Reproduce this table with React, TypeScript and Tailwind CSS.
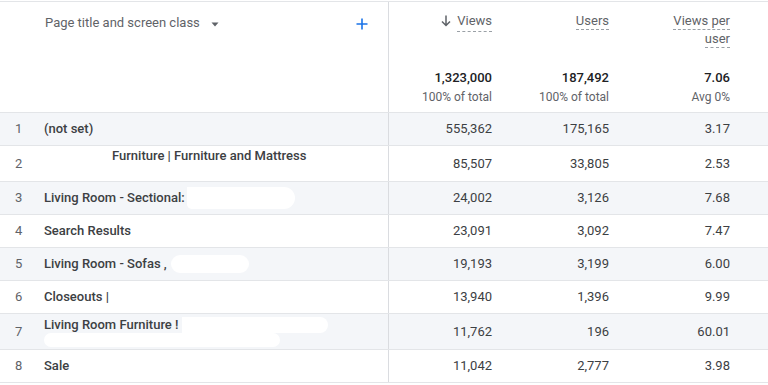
import React from "react"

type Row = {
  n: number
  views: string
  users: string
  vpu: string
  tall?: boolean
  shaded: boolean
  title: React.ReactNode
}

// white patches: the blanked-out parts of the page titles
const Blot = ({ className }: { className: string }) => (
  <span className={`inline-block bg-white align-middle ${className}`} />
)

const rows: Row[] = [
  { n: 1, views: "555,362", users: "175,165", vpu: "3.17", shaded: true, title: "(not set)" },
  {
    n: 2,
    views: "85,507",
    users: "33,805",
    vpu: "2.53",
    tall: true,
    shaded: false,
    title: (
      <div className="flex flex-col leading-[16px]">
        <span className="pl-[68px]">Furniture | Furniture and Mattress</span>
        <span className="h-[16px]" />
      </div>
    ),
  },
  {
    n: 3,
    views: "24,002",
    users: "3,126",
    vpu: "7.68",
    shaded: true,
    title: (
      <span className="flex items-center">
        Living Room - Sectional:
        <Blot className="ml-[2px] h-[22px] w-[108px] rounded-r-[14px] rounded-bl-[6px]" />
      </span>
    ),
  },
  { n: 4, views: "23,091", users: "3,092", vpu: "7.47", shaded: false, title: "Search Results" },
  {
    n: 5,
    views: "19,193",
    users: "3,199",
    vpu: "6.00",
    shaded: true,
    title: (
      <span className="flex items-center">
        Living Room - Sofas ,
        <Blot className="ml-[4px] h-[18px] w-[78px] rounded-[9px]" />
      </span>
    ),
  },
  { n: 6, views: "13,940", users: "1,396", vpu: "9.99", shaded: false, title: "Closeouts |" },
  {
    n: 7,
    views: "11,762",
    users: "196",
    vpu: "60.01",
    tall: true,
    shaded: true,
    title: (
      <div className="flex flex-col leading-[16px]">
        <span className="flex items-center">
          Living Room Furniture !
          <Blot className="ml-[3px] h-[16px] w-[146px] rounded-r-[10px]" />
        </span>
        <span className="flex items-center">
          <Blot className="h-[14px] w-[236px] rounded-[8px]" />
        </span>
      </div>
    ),
  },
  { n: 8, views: "11,042", users: "2,777", vpu: "3.98", shaded: false, title: "Sale" },
]

const Dashed = ({ children }: { children: React.ReactNode }) => (
  <span className="border-b border-dashed border-[#9aa0a6] pb-[1px]">{children}</span>
)

export default function App() {
  return (
    <div className="w-[768px] h-[385px] bg-white pt-px font-['Roboto',sans-serif] text-[13px] overflow-hidden">
      {/* header */}
      <div className="flex h-[112px] border-y border-[#e3e5e8]">
        <div className="w-[389px] shrink-0 border-r border-[#dadce0] flex items-start justify-between pl-[45px] pr-[20px] pt-[12px]">
          <div className="flex items-center leading-[18px] text-[#5f6368]">
            <span>Page title and screen class</span>
            <svg width="8" height="5" viewBox="0 0 8 5" className="ml-[11px] mt-[2px]">
              <path d="M0.5 0.5 L7.5 0.5 L4 4.5 Z" fill="#5f6368" />
            </svg>
          </div>
          <svg width="12" height="12" viewBox="0 0 12 12" className="mt-[4px]">
            <path d="M6 0.5 V11.5 M0.5 6 H11.5" stroke="#1a73e8" strokeWidth="1.6" />
          </svg>
        </div>
        <HeaderCell
          w="w-[119px]"
          label={
            <span className="inline-flex items-start">
              <svg width="10" height="12" viewBox="0 0 10 12" className="mr-[6px] mt-[3px]">
                <path d="M5 0.5 V10.5 M1 6.5 L5 10.5 L9 6.5" stroke="#5f6368" strokeWidth="1.5" fill="none" />
              </svg>
              <Dashed>Views</Dashed>
            </span>
          }
          total="1,323,000"
          sub="100% of total"
        />
        <HeaderCell w="w-[117px]" label={<Dashed>Users</Dashed>} total="187,492" sub="100% of total" />
        <HeaderCell
          w="w-[121px]"
          label={
            <span className="block w-[62px] ml-auto">
              <Dashed>Views per user</Dashed>
            </span>
          }
          total="7.06"
          sub="Avg 0%"
        />
        <div className="flex-1" />
      </div>

      {rows.map((r) => (
        <div
          key={r.n}
          className={`flex border-b border-[#e3e5e8] ${r.tall ? "h-[36px]" : "h-[33px]"} ${
            r.shaded ? "bg-[#f4f6f9]" : "bg-white"
          }`}
        >
          <div className="w-[389px] shrink-0 border-r border-[#dadce0] flex items-center">
            <span className="w-[38px] pl-[15px] text-[#5f6368]">{r.n}</span>
            <div className="pl-[6px] font-medium text-[#3c4043]">{r.title}</div>
          </div>
          <div className="w-[119px] pr-[16px] flex items-center justify-end text-[#3c4043]">{r.views}</div>
          <div className="w-[117px] pr-[16px] flex items-center justify-end text-[#3c4043]">{r.users}</div>
          <div className="w-[121px] pr-[16px] flex items-center justify-end text-[#3c4043]">{r.vpu}</div>
          <div className="flex-1" />
        </div>
      ))}
    </div>
  )
}

function HeaderCell({
  w,
  label,
  total,
  sub,
}: {
  w: string
  label: React.ReactNode
  total: string
  sub: string
}) {
  return (
    <div className={`${w} pr-[16px] pt-[10px] pb-[7px] flex flex-col items-end text-right`}>
      <div className="leading-[18px] text-[#5f6368]">{label}</div>
      <div className="mt-auto leading-[18px] font-medium text-[#202124]">{total}</div>
      <div className="mt-[2px] leading-[16px] text-[12px] text-[#5f6368]">{sub}</div>
    </div>
  )
}
